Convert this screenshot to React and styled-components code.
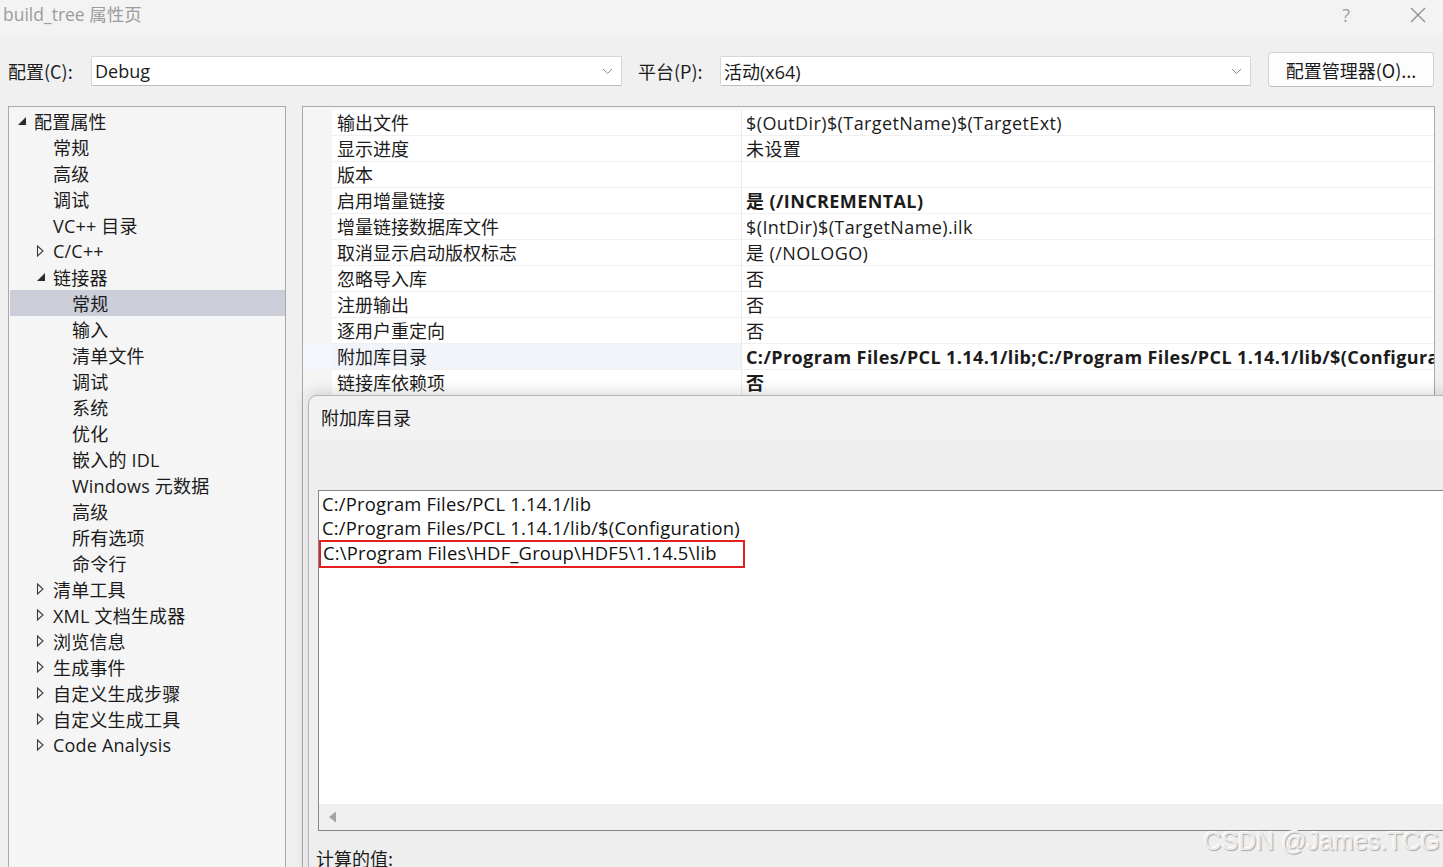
import React from "react";
import styled, { createGlobalStyle } from "styled-components";

const GlobalStyle = createGlobalStyle`
  html, body { margin: 0; padding: 0; background: #f0f0f0; overflow: hidden; }
  body { font-family: "Open Sans", "Noto Sans CJK SC", sans-serif; color: #1b1b1b; }
  * { box-sizing: border-box; }
`;

const Window = styled.div`
  position: relative;
  width: 1443px;
  height: 867px;
  overflow: hidden;
  display: flex;
  flex-direction: column;
  background: #f0f0f0;
`;

const TitleBar = styled.div`
  height: 35px;
  flex: none;
  display: flex;
  align-items: center;
  padding: 0 0 9px 3px;
  background: #f3f3f3;
`;

const TitleText = styled.span`
  font-size: 17.5px;
  color: #9c9c9c;
  font-family: "Open Sans", "Noto Sans CJK SC", sans-serif;
`;

const TitleControls = styled.div`
  margin-left: auto;
  display: flex;
  align-items: center;
  gap: 60px;
  padding-right: 17px;
  margin-top: 4px;
`;

const HelpGlyph = styled.span`
  font-size: 18px;
  color: #a0a0a0;
  font-family: "Open Sans", sans-serif;
`;

const ConfigRow = styled.div`
  height: 71px;
  flex: none;
  display: flex;
  align-items: center;
  padding: 0 9px 0 8px;
  font-family: "Noto Sans CJK SC", "Open Sans", sans-serif;
  font-size: 18px;
`;

const FieldLabel = styled.span`
  width: ${(p) => p.$w}px;
  flex: none;
  margin-left: ${(p) => p.$ml || 0}px;
  color: #1b1b1b;
`;

const Select = styled.div`
  width: 531px;
  height: 30px;
  flex: none;
  display: flex;
  align-items: center;
  padding: 0 8px 0 3px;
  background: #ffffff;
  border: 1px solid #d6d6d6;
  border-bottom-color: #bdbdbd;
  border-radius: 2px;
  font-family: "Open Sans", "Noto Sans CJK SC", sans-serif;
  font-size: 18px;
  margin-top: 1px;
`;

const SelectValue = styled.span`
  flex: 1;
`;

const Button = styled.div`
  width: 166px;
  height: 35px;
  flex: none;
  margin-left: 17px;
  margin-top: -2px;
  display: flex;
  align-items: center;
  justify-content: center;
  background: #fdfdfd;
  border: 1px solid #d2d2d2;
  border-bottom-color: #c0c0c0;
  border-radius: 4px;
  font-size: 18px;
  font-family: "Noto Sans CJK SC", "Open Sans", sans-serif;
`;

const Main = styled.div`
  flex: 1;
  min-height: 0;
  display: flex;
  gap: 16px;
  padding: 0 8px;
`;

const TreePanel = styled.div`
  width: 278px;
  flex: none;
  height: 800px;
  background: #f5f5f5;
  border: 1px solid #a9a9a9;
  padding-top: 1px;
`;

const TreeRow = styled.div`
  height: 26px;
  display: flex;
  align-items: center;
  padding-left: ${(p) => 7 + p.$level * 19}px;
  margin: 0 0 0 1px;
  background: ${(p) => (p.$selected ? "#cbcdd9" : "transparent")};
  font-size: 18px;
  letter-spacing: 0.2px;
  white-space: nowrap;
  color: #1b1b1b;
`;

const Expander = styled.span`
  width: 17px;
  flex: none;
  display: flex;
  align-items: center;
  height: 26px;
`;

const PropPanel = styled.div`
  flex: 1;
  height: 800px;
  background: #f7f7f7;
  border: 1px solid #a9a9a9;
  padding-top: 3px;
`;

const PropRow = styled.div`
  height: 26px;
  display: grid;
  grid-template-columns: 29px 409px 1fr;
  font-size: 18px;
`;

const Gutter = styled.div`
  background: ${(p) => (p.$selected ? "#f3f6fb" : "#f5f5f5")};
`;

const Cell = styled.div`
  height: 26px;
  line-height: 27px;
  padding-left: ${(p) => p.$pl}px;
  background: ${(p) => (p.$selected ? "#f1f5fb" : "#ffffff")};
  border-bottom: 1px solid #f0f0f0;
  border-left: ${(p) => (p.$divider ? "1px solid #ececec" : "none")};
  font-weight: ${(p) => (p.$bold ? 700 : 400)};
  letter-spacing: ${(p) => (p.$divider ? "0.4px" : "0")};
  white-space: nowrap;
  overflow: hidden;
  color: #1b1b1b;
`;

const Dialog = styled.div`
  position: absolute;
  left: 308px;
  top: 395px;
  right: -20px;
  bottom: -40px;
  display: flex;
  flex-direction: column;
  background: #eeeeee;
  border: 1px solid #b5b5b5;
  border-radius: 9px 0 0 0;
  box-shadow: -2px -4px 14px rgba(0, 0, 0, 0.13);
`;

const DialogHeader = styled.div`
  height: 44px;
  flex: none;
  display: flex;
  align-items: center;
  padding: 0 0 3px 12px;
  background: #f2f2f2;
  border-radius: 9px 0 0 0;
  font-size: 18px;
`;

const DialogBody = styled.div`
  flex: 1;
  padding: 50px 0 0 9px;
  display: flex;
  flex-direction: column;
`;

const ListBox = styled.div`
  height: 341px;
  flex: none;
  display: flex;
  flex-direction: column;
  background: #ffffff;
  border: 1px solid #838790;
  border-right: none;
`;

const ListContent = styled.div`
  flex: 1;
  padding-top: 1px;
`;

const ListLine = styled.div`
  height: 24px;
  line-height: 24px;
  padding-left: 3px;
  font-size: 18.4px;
  letter-spacing: 0.2px;
  white-space: nowrap;
  color: #111;
`;

const HighlightLine = styled.div`
  width: 426px;
  height: 28px;
  line-height: 21px;
  padding: 0 0 3px 2px;
  border: 2px solid #e32020;
  font-size: 18.4px;
  letter-spacing: 0.2px;
  white-space: nowrap;
  color: #111;
`;

const HScroll = styled.div`
  height: 26px;
  flex: none;
  display: flex;
  align-items: center;
  padding-left: 9px;
  background: #f0f0f0;
`;

const ComputedLabel = styled.div`
  margin-top: 14px;
  font-size: 18px;
  margin-left: -2px;
  font-family: "Noto Sans CJK SC", sans-serif;
`;

const Watermark = styled.div`
  position: absolute;
  right: 3px;
  bottom: 11px;
  font-family: "Liberation Sans", Arial, sans-serif;
  font-size: 25px;
  color: #ececec;
  text-shadow: 1px 1px 1px #a9a9a9, -1px -1px 0 #ffffff;
`;

const Chevron = () => (
  <svg width="11" height="7" viewBox="0 0 11 7">
    <polyline points="1,1 5.5,5.5 10,1" fill="none" stroke="#8a8a8a" strokeWidth="1" />
  </svg>
);

const CloseIcon = () => (
  <svg width="16" height="16" viewBox="0 0 16 16">
    <line x1="1" y1="1" x2="15" y2="15" stroke="#8d8d8d" strokeWidth="1.2" />
    <line x1="15" y1="1" x2="1" y2="15" stroke="#8d8d8d" strokeWidth="1.2" />
  </svg>
);

const OpenTri = () => (
  <svg width="10" height="10" viewBox="0 0 10 10">
    <polygon points="9,1 9,9 1,9" fill="#2b2b2b" />
  </svg>
);

const ClosedTri = () => (
  <svg width="9" height="12" viewBox="0 0 9 12">
    <polygon points="1.5,1 7,6 1.5,11" fill="none" stroke="#3a3a3a" strokeWidth="1.1" />
  </svg>
);

const LeftArrow = () => (
  <svg width="9" height="12" viewBox="0 0 9 12">
    <polygon points="8,0.5 8,11.5 1,6" fill="#a3a3a3" />
  </svg>
);

const tree = [
  { l: 0, e: "open", t: "配置属性" },
  { l: 1, t: "常规" },
  { l: 1, t: "高级" },
  { l: 1, t: "调试" },
  { l: 1, t: "VC++ 目录" },
  { l: 1, e: "closed", t: "C/C++" },
  { l: 1, e: "open", t: "链接器" },
  { l: 2, t: "常规", sel: true },
  { l: 2, t: "输入" },
  { l: 2, t: "清单文件" },
  { l: 2, t: "调试" },
  { l: 2, t: "系统" },
  { l: 2, t: "优化" },
  { l: 2, t: "嵌入的 IDL" },
  { l: 2, t: "Windows 元数据" },
  { l: 2, t: "高级" },
  { l: 2, t: "所有选项" },
  { l: 2, t: "命令行" },
  { l: 1, e: "closed", t: "清单工具" },
  { l: 1, e: "closed", t: "XML 文档生成器" },
  { l: 1, e: "closed", t: "浏览信息" },
  { l: 1, e: "closed", t: "生成事件" },
  { l: 1, e: "closed", t: "自定义生成步骤" },
  { l: 1, e: "closed", t: "自定义生成工具" },
  { l: 1, e: "closed", t: "Code Analysis" },
];

const props = [
  { n: "输出文件", v: "$(OutDir)$(TargetName)$(TargetExt)" },
  { n: "显示进度", v: "未设置" },
  { n: "版本", v: "" },
  { n: "启用增量链接", v: "是 (/INCREMENTAL)", b: true },
  { n: "增量链接数据库文件", v: "$(IntDir)$(TargetName).ilk" },
  { n: "取消显示启动版权标志", v: "是 (/NOLOGO)" },
  { n: "忽略导入库", v: "否" },
  { n: "注册输出", v: "否" },
  { n: "逐用户重定向", v: "否" },
  {
    n: "附加库目录",
    v: "C:/Program Files/PCL 1.14.1/lib;C:/Program Files/PCL 1.14.1/lib/$(Configuration)",
    b: true,
    s: true,
  },
  { n: "链接库依赖项", v: "否", b: true },
];

export default function App() {
  return (
    <>
      <GlobalStyle />
      <Window>
        <TitleBar>
          <TitleText>build_tree 属性页</TitleText>
          <TitleControls>
            <HelpGlyph>?</HelpGlyph>
            <CloseIcon />
          </TitleControls>
        </TitleBar>

        <ConfigRow>
          <FieldLabel $w={83}>配置(C):</FieldLabel>
          <Select>
            <SelectValue>Debug</SelectValue>
            <Chevron />
          </Select>
          <FieldLabel $w={82} $ml={16}>平台(P):</FieldLabel>
          <Select>
            <SelectValue>活动(x64)</SelectValue>
            <Chevron />
          </Select>
          <Button>配置管理器(O)...</Button>
        </ConfigRow>

        <Main>
          <TreePanel>
            {tree.map((r, i) => (
              <TreeRow key={i} $level={r.l} $selected={r.sel}>
                <Expander>
                  {r.e === "open" && <OpenTri />}
                  {r.e === "closed" && <ClosedTri />}
                </Expander>
                {r.t}
              </TreeRow>
            ))}
          </TreePanel>

          <PropPanel>
            {props.map((p, i) => (
              <PropRow key={i}>
                <Gutter $selected={p.s} />
                <Cell $pl={5} $selected={p.s}>
                  {p.n}
                </Cell>
                <Cell $pl={4} $divider $bold={p.b}>
                  {p.v}
                </Cell>
              </PropRow>
            ))}
          </PropPanel>
        </Main>

        <Dialog>
          <DialogHeader>附加库目录</DialogHeader>
          <DialogBody>
            <ListBox>
              <ListContent>
                <ListLine>C:/Program Files/PCL 1.14.1/lib</ListLine>
                <ListLine>C:/Program Files/PCL 1.14.1/lib/$(Configuration)</ListLine>
                <HighlightLine>C:\Program Files\HDF_Group\HDF5\1.14.5\lib</HighlightLine>
              </ListContent>
              <HScroll>
                <LeftArrow />
              </HScroll>
            </ListBox>
            <ComputedLabel>计算的值:</ComputedLabel>
          </DialogBody>
        </Dialog>

        <Watermark>CSDN @James.TCG</Watermark>
      </Window>
    </>
  );
}
